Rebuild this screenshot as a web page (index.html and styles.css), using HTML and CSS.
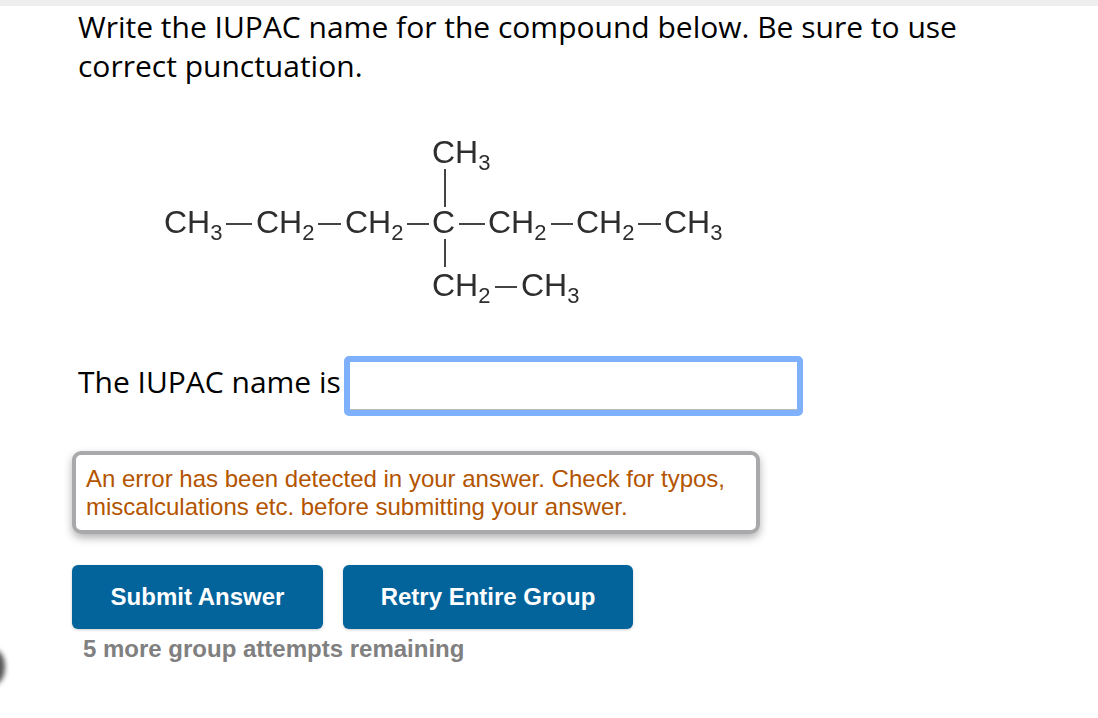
FILE: index.html
```html
<!DOCTYPE html>
<html lang="en">
  <head>
    <meta charset="UTF-8" />
    <meta name="viewport" content="width=device-width, initial-scale=1.0" />
    <title>IUPAC Question</title>
    <link rel="stylesheet" href="styles.css">
  </head>
  <body>
    <div class="top-bar"></div>
    <div class="edge-dot"></div>
    <div class="question">
      <p class="prompt">Write the IUPAC name for the compound below. Be sure to use correct punctuation.</p>

      <svg class="structure" width="600" height="184" viewBox="140 125 600 184">
        <g class="atoms">
          <text x="432" y="162">CH<tspan class="sub" dy="7">3</tspan></text>
          <text x="164" y="232">CH<tspan class="sub" dy="7">3</tspan></text>
          <text x="256" y="232">CH<tspan class="sub" dy="7">2</tspan></text>
          <text x="345" y="232">CH<tspan class="sub" dy="7">2</tspan></text>
          <text x="432" y="232">C</text>
          <text x="488" y="232">CH<tspan class="sub" dy="7">2</tspan></text>
          <text x="576" y="232">CH<tspan class="sub" dy="7">2</tspan></text>
          <text x="664" y="232">CH<tspan class="sub" dy="7">3</tspan></text>
          <text x="432" y="295">CH<tspan class="sub" dy="7">2</tspan></text>
          <text x="521" y="295">CH<tspan class="sub" dy="7">3</tspan></text>
        </g>
        <g class="bonds">
          <path d="M445 168V206M445 238V266" />
          <path d="M226 223H252M318 223H341M407 223H429M459 223H485M551 223H573M638 223H661M495 286H517" />
        </g>
      </svg>

      <div class="answer-row">
        <label class="answer-label" for="answer">The IUPAC name is</label>
        <input class="answer-input" id="answer" type="text" />
      </div>

      <div class="error-box">An error has been detected in your answer. Check for typos, miscalculations etc. before submitting your answer.</div>

      <div class="actions">
        <button class="btn btn-submit">Submit Answer</button>
        <button class="btn btn-retry">Retry Entire Group</button>
      </div>
      <div class="attempts">5 more group attempts remaining</div>
    </div>
  </body>
</html>
```

FILE: styles.css
```css
html, body {
  margin: 0;
  padding: 0;
}
body {
  background: #fff;
  color: #000;
  font-family: "Open Sans", sans-serif;
  height: 718px;
  overflow: hidden;
  position: relative;
}
.top-bar {
  height: 6px;
  background: #eeeeee;
}
.edge-dot {
  position: absolute;
  left: -15px;
  top: 650px;
  width: 20px;
  height: 34px;
  border-radius: 50%;
  background: #555;
  filter: blur(2.5px);
}
.question {
  padding-left: 72px;
}
.prompt {
  margin: 0 0 0 6px;
  width: 900px;
  font-size: 30px;
  line-height: 39px;
  padding-top: 1px;
}
.structure {
  display: block;
  margin: 41px 0 0 68px;
  filter: blur(0.5px);
}
.atoms text {
  font-family: "Liberation Sans", sans-serif;
  font-size: 32px;
  fill: #2e2e2e;
}
.atoms .sub {
  font-size: 22px;
}
.bonds path {
  stroke: #444;
  stroke-width: 2;
  fill: none;
}
.answer-row {
  display: flex;
  align-items: center;
  margin: 46px 0 0 6px;
}
.answer-label {
  font-size: 30px;
  line-height: 44px;
  margin-bottom: 8px;
}
.answer-input {
  box-sizing: border-box;
  width: 459px;
  height: 60px;
  margin-left: 3px;
  background: #fff;
  border: 6px solid #7fb0fb;
  border-radius: 5px;
  box-shadow: inset 0 -1px 0 #b9b9b9;
  outline: none;
}
.error-box {
  box-sizing: border-box;
  width: 688px;
  height: 83px;
  margin-top: 35px;
  padding: 10px 10px;
  border: 4px solid #a9a9ac;
  border-radius: 9px;
  box-shadow: 0 4px 8px rgba(0, 0, 0, 0.3);
  color: #b35400;
  font-family: "Liberation Sans", sans-serif;
  font-size: 24px;
  line-height: 28px;
}
.actions {
  display: flex;
  gap: 20px;
  margin-top: 31px;
}
.btn {
  height: 64px;
  padding: 0;
  border: none;
  border-radius: 6px;
  background: #03649c;
  box-shadow: 0 1px 3px rgba(0, 0, 0, 0.2);
  color: #fff;
  font-family: "Liberation Sans", sans-serif;
  font-size: 24px;
  font-weight: bold;
}
.btn-submit {
  width: 251px;
}
.btn-retry {
  width: 290px;
}
.attempts {
  margin: 5px 0 0 11px;
  color: #808080;
  font-family: "Liberation Sans", sans-serif;
  font-size: 24px;
  font-weight: bold;
  line-height: 30px;
}
```
